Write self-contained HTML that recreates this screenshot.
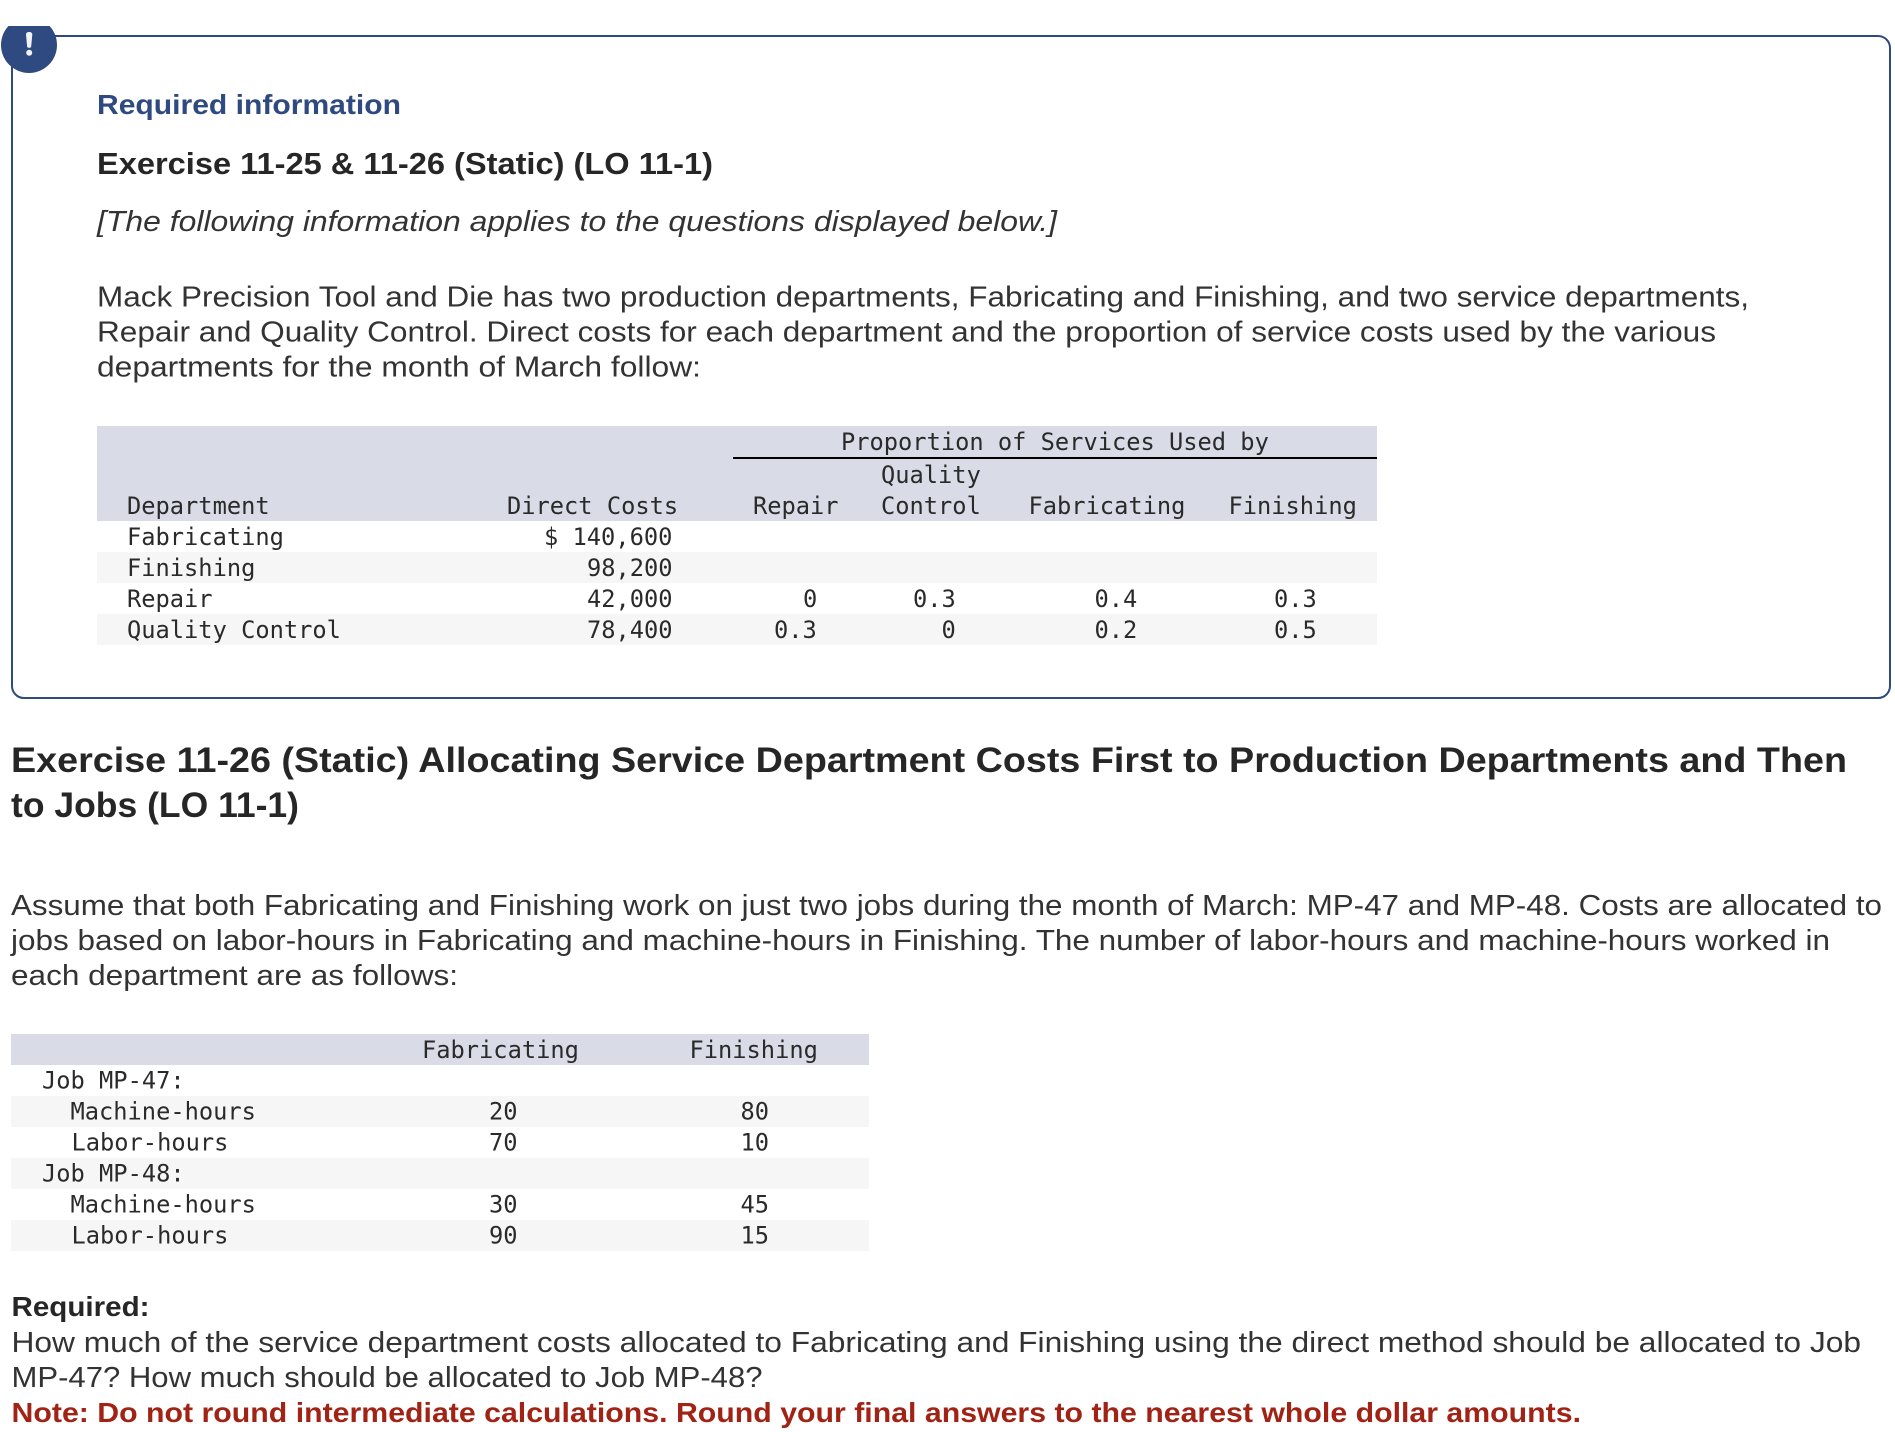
<!DOCTYPE html>
<html lang="en">
<head>
<meta charset="utf-8">
<title>Exercise 11-26</title>
<style>
html,body{margin:0;padding:0;background:#fff}
body{width:1895px;height:1432px;overflow:hidden}
svg{display:block}
text{white-space:pre}
.s{font-family:"Liberation Sans",Arial,sans-serif;fill:#2b2b2b}
.l{font-size:29px;fill:#333}
.b{font-weight:bold;fill:#262626}
.m{font-family:"DejaVu Sans Mono","Liberation Mono",monospace;font-size:23.7px;fill:#2a2a2a}
</style>
</head>
<body>
<svg xmlns="http://www.w3.org/2000/svg" width="1895" height="1432" viewBox="0 0 1895 1432">
<rect width="1895" height="1432" fill="#fff"/>
<!-- card -->
<rect x="12" y="36" width="1878" height="662" rx="12" fill="#fff" stroke="#2e4a80" stroke-width="2"/>
<rect x="0" y="0" width="1895" height="26" fill="#fff"/>
<clipPath id="c"><rect x="0" y="26" width="70" height="60"/></clipPath>
<circle cx="29" cy="45" r="28" fill="#2e4a80" clip-path="url(#c)"/>
<path d="M26 34.500C26 32.800 27.300 32 29.200 32C31 32 32.300 32.800 32.300 34.500L31.200 46.500C31.100 47.400 30.300 47.800 29.200 47.800C28 47.800 27.200 47.400 27.100 46.500Z" fill="#f2f3f7"/>
<circle cx="29.200" cy="52.800" r="3" fill="#f2f3f7"/>

<text class="s" x="97" y="114" font-size="28" font-weight="bold" style="fill:#2e4a80" textLength="304" lengthAdjust="spacingAndGlyphs">Required information</text>
<text class="s b" x="97" y="174" font-size="31" textLength="616" lengthAdjust="spacingAndGlyphs">Exercise 11-25 &amp; 11-26 (Static) (LO 11-1)</text>
<text class="s l" x="97" y="231" font-style="italic" textLength="960" lengthAdjust="spacingAndGlyphs">[The following information applies to the questions displayed below.]</text>
<text class="s l" x="97" y="306.500" textLength="1652" lengthAdjust="spacingAndGlyphs">Mack Precision Tool and Die has two production departments, Fabricating and Finishing, and two service departments,</text>
<text class="s l" x="97" y="341.500" textLength="1619" lengthAdjust="spacingAndGlyphs">Repair and Quality Control. Direct costs for each department and the proportion of service costs used by the various</text>
<text class="s l" x="97" y="376.500" textLength="604" lengthAdjust="spacingAndGlyphs">departments for the month of March follow:</text>

<!-- table 1 -->
<rect x="97" y="426" width="1280" height="95" fill="#d9dce6"/>
<rect x="97" y="552" width="1280" height="31" fill="#f6f6f6"/>
<rect x="97" y="614" width="1280" height="31" fill="#f6f6f6"/>
<rect x="733" y="457" width="644" height="2" fill="#000"/>
<text class="m" x="841" y="450">Proportion of Services Used by</text>
<text class="m" x="881" y="483">Quality</text>
<text class="m" x="127" y="514">Department</text>
<text class="m" x="507" y="514">Direct Costs</text>
<text class="m" x="753" y="514">Repair</text>
<text class="m" x="881" y="514">Control</text>
<text class="m" x="1028.500" y="514">Fabricating</text>
<text class="m" x="1228.500" y="514">Finishing</text>
<text class="m" x="127" y="545">Fabricating</text>
<text class="m" x="544" y="545">$ 140,600</text>
<text class="m" x="127" y="576">Finishing</text>
<text class="m" x="587" y="576">98,200</text>
<text class="m" x="127" y="607">Repair</text>
<text class="m" x="587" y="607">42,000</text>
<text class="m" x="803" y="607">0</text>
<text class="m" x="913" y="607">0.3</text>
<text class="m" x="1094.500" y="607">0.4</text>
<text class="m" x="1274" y="607">0.3</text>
<text class="m" x="127" y="638">Quality Control</text>
<text class="m" x="587" y="638">78,400</text>
<text class="m" x="774" y="638">0.3</text>
<text class="m" x="941.500" y="638">0</text>
<text class="m" x="1094.500" y="638">0.2</text>
<text class="m" x="1274" y="638">0.5</text>

<!-- heading -->
<text class="s b" x="11" y="772" font-size="35.500" textLength="1836" lengthAdjust="spacingAndGlyphs">Exercise 11-26 (Static) Allocating Service Department Costs First to Production Departments and Then</text>
<text class="s b" x="11" y="817" font-size="35.500" textLength="288" lengthAdjust="spacingAndGlyphs">to Jobs (LO 11-1)</text>

<text class="s l" x="11" y="915" textLength="1871" lengthAdjust="spacingAndGlyphs">Assume that both Fabricating and Finishing work on just two jobs during the month of March: MP-47 and MP-48. Costs are allocated to</text>
<text class="s l" x="11" y="950" textLength="1819" lengthAdjust="spacingAndGlyphs">jobs based on labor-hours in Fabricating and machine-hours in Finishing. The number of labor-hours and machine-hours worked in</text>
<text class="s l" x="11" y="985" textLength="447" lengthAdjust="spacingAndGlyphs">each department are as follows:</text>

<!-- table 2 -->
<rect x="11" y="1034" width="858" height="31" fill="#d9dce6"/>
<rect x="11" y="1096" width="858" height="31" fill="#f6f6f6"/>
<rect x="11" y="1158" width="858" height="31" fill="#f6f6f6"/>
<rect x="11" y="1220" width="858" height="31" fill="#f6f6f6"/>
<text class="m" x="422" y="1058">Fabricating</text>
<text class="m" x="689.500" y="1058">Finishing</text>
<text class="m" x="42" y="1088.500">Job MP-47:</text>
<text class="m" x="70.500" y="1119.500">Machine-hours</text>
<text class="m" x="489" y="1119.500">20</text>
<text class="m" x="740.500" y="1119.500">80</text>
<text class="m" x="71.500" y="1150.500">Labor-hours</text>
<text class="m" x="489" y="1150.500">70</text>
<text class="m" x="740.500" y="1150.500">10</text>
<text class="m" x="42" y="1181.500">Job MP-48:</text>
<text class="m" x="70.500" y="1212.500">Machine-hours</text>
<text class="m" x="489" y="1212.500">30</text>
<text class="m" x="740.500" y="1212.500">45</text>
<text class="m" x="71.500" y="1243.500">Labor-hours</text>
<text class="m" x="489" y="1243.500">90</text>
<text class="m" x="740.500" y="1243.500">15</text>

<!-- required -->
<text class="s b" x="11.500" y="1316" font-size="28" textLength="138" lengthAdjust="spacingAndGlyphs">Required:</text>
<text class="s l" x="11.500" y="1352" textLength="1849.500" lengthAdjust="spacingAndGlyphs">How much of the service department costs allocated to Fabricating and Finishing using the direct method should be allocated to Job</text>
<text class="s l" x="11.500" y="1387" textLength="751" lengthAdjust="spacingAndGlyphs">MP-47? How much should be allocated to Job MP-48?</text>
<text class="s" x="11.500" y="1422" font-size="28" font-weight="bold" style="fill:#a12315" textLength="1569.500" lengthAdjust="spacingAndGlyphs">Note: Do not round intermediate calculations. Round your final answers to the nearest whole dollar amounts.</text>
</svg>
</body>
</html>
